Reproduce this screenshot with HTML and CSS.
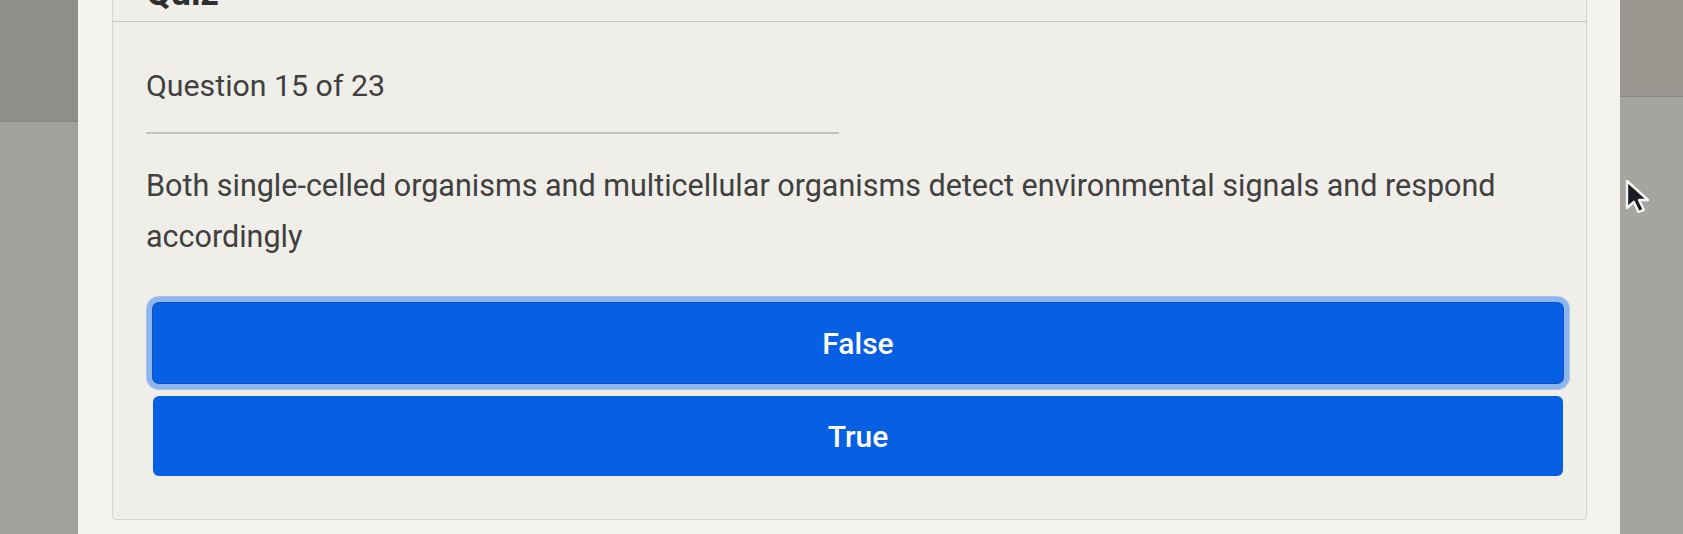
FILE: index.html
```html
<!DOCTYPE html>
<html lang="en">
<head>
<meta charset="utf-8">
<title>Quiz</title>
<link rel="stylesheet" href="styles.css">
</head>
<body>
<div class="screen">
  <div class="side side-left">
    <div class="side-top side-top-left"></div>
    <div class="side-bottom"></div>
  </div>
  <main class="page">
    <section class="card">
      <header class="card-head">
        <h1 class="card-title">Quiz</h1>
      </header>
      <div class="card-body">
        <p class="q-count">Question 15 of 23</p>
        <hr class="rule">
        <p class="q-text">Both single-celled organisms and multicellular organisms detect environmental signals and respond accordingly</p>
        <div class="answers">
          <button class="answer answer-focused" type="button">False</button>
          <button class="answer" type="button">True</button>
        </div>
      </div>
    </section>
  </main>
  <div class="side side-right">
    <div class="side-top side-top-right"></div>
    <div class="side-bottom"></div>
    <svg class="cursor" width="28" height="38" viewBox="0 0 28 38" aria-hidden="true">
      <path d="M2 2 L2 29 L8.8 22.8 L13.5 33 L18.8 30.8 L14 21 L23 21 Z" fill="#1b1b26" stroke="#f4f4ef" stroke-width="2.4" stroke-linejoin="round"/>
    </svg>
  </div>
</div>
</body>
</html>
```

FILE: styles.css
```css
html, body {
  margin: 0;
  padding: 0;
  height: 100%;
  overflow: hidden;
}

body {
  font-family: Roboto, "Liberation Sans", Arial, sans-serif;
  background: #f4f3ee;
}

.screen {
  display: flex;
  width: 1683px;
  height: 534px;
}

.side {
  display: flex;
  flex-direction: column;
  position: relative;
}

.side-left {
  width: 78px;
}

.side-right {
  width: 63px;
}

.side-top-left {
  height: 121px;
  background: #8f8e8b;
  border-bottom: 1px solid #858481;
}

.side-top-right {
  height: 96px;
  background: #99978f;
  border-bottom: 1px solid #8a8884;
}

.side-bottom {
  flex: 1;
  background: #a2a09b;
}

.side-right .side-bottom {
  background: #a6a4a0;
}

.cursor {
  position: absolute;
  left: 5px;
  top: 179px;
}

.page {
  flex: 1;
  background: #f4f3ee;
  display: flex;
  flex-direction: column;
}

.card {
  margin: -40px 33px 0 34px;
  background: #efeee8;
  border: 1px solid #d6d4cd;
  border-radius: 4px;
}

.card-head {
  height: 60px;
  display: flex;
  align-items: flex-end;
  padding-left: 33px;
  border-bottom: 1px solid #c9c7c0;
}

.card-title {
  margin: 0 0 10px 0;
  font-size: 36px;
  line-height: 36px;
  font-weight: 700;
  color: #2e2e2e;
}

.card-body {
  padding: 0 23px 43px 33px;
}

.q-count {
  margin: 46px 0 0 0;
  font-size: 30.3px;
  line-height: 36px;
  color: #404040;
}

.rule {
  margin: 28px 0 0 0;
  width: 693px;
  height: 2px;
  border: 0;
  background: #c3c1ba;
}

.q-text {
  margin: 26px 0 0 0;
  font-size: 30.5px;
  line-height: 51px;
  color: #404040;
}

.answers {
  margin: 41px 0 0 7px;
  display: flex;
  flex-direction: column;
  gap: 13px;
}

.answer {
  height: 80px;
  border: 0;
  border-radius: 6px;
  background: #075fe4;
  color: #ffffff;
  font-family: Roboto, "Liberation Sans", Arial, sans-serif;
  font-size: 30px;
  font-weight: 500;
  padding: 0;
  cursor: pointer;
}

.answer-focused {
  box-shadow: 0 0 0 1px #0a4fc0, 0 0 0 6px #8db5ee, 0 0 0 7px #a9c4ea;
}
```
